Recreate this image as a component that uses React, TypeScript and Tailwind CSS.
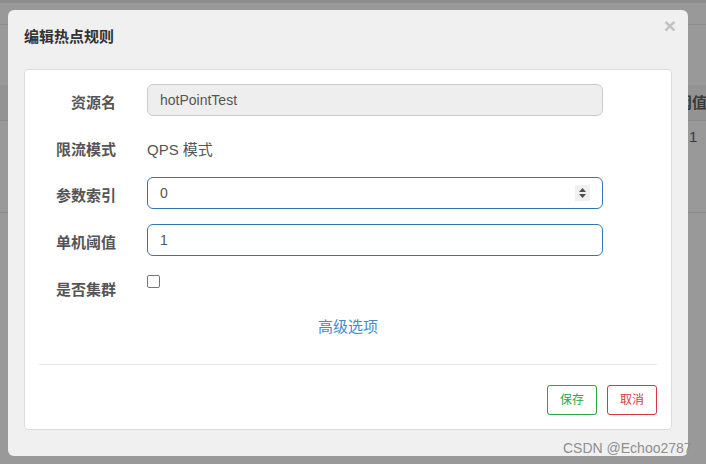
import React from 'react';

const FONT = { fontFamily: '"Liberation Sans", "Noto Sans CJK SC", sans-serif' };

function Spinner() {
  return (
    <span className="flex h-[16px] w-[15px] items-center justify-center bg-[#f0f0f0]">
      <svg width="15" height="16" viewBox="0 0 15 16">
        <polygon points="4,7 11,7 7.5,3" fill="#505050" />
        <polygon points="4,9 11,9 7.5,13" fill="#505050" />
      </svg>
    </span>
  );
}

function Row({ label, children, labelClass = '' }: { label: string; children: React.ReactNode; labelClass?: string }) {
  return (
    <div className="flex items-start">
      <div className={`w-[106px] shrink-0 pr-[15px] pt-[8px] text-right text-[15px] font-bold leading-[21px] text-[#555] ${labelClass}`}>
        {label}
      </div>
      <div className="w-[472px] pl-[16px]">{children}</div>
    </div>
  );
}

export default function App() {
  return (
    <div className="relative h-[464px] w-[706px] overflow-hidden bg-[#999]" style={FONT}>
      {/* page behind the overlay */}
      <div className="h-[25px] border-t-[3px] border-b border-t-[#8d8d8d] border-b-[#8e8e8e]" />
      <div className="h-[60px]" />
      <div className="grid h-[36px] grid-cols-[677px_1fr] items-center border-b border-[#8c8c8c] bg-[#939393]">
        <div />
        <div className="whitespace-nowrap pt-[2px] text-[15px] font-bold text-[#3a3a3a]">阈值</div>
      </div>
      <div className="grid h-[92px] grid-cols-[689px_1fr] border-b border-[#8a8a8a]">
        <div />
        <div className="pt-[6px] text-[15px] leading-[20px] text-[#3a3a3a]">1</div>
      </div>

      {/* modal */}
      <div className="absolute left-[8px] top-[10px] flex h-[446px] w-[680px] flex-col rounded-[6px] bg-[#f0f0f0]">
        <div className="flex h-[59px] shrink-0 items-start justify-between pl-[16px] pr-[12px]">
          <h4 className="pt-[16px] text-[15px] font-bold leading-[22px] text-[#333]">编辑热点规则</h4>
          <span className="mt-[5px] text-[21px] font-bold leading-[21px] text-[#c2c2c2]">×</span>
        </div>

        <div className="mx-[16px] flex h-[361px] flex-col rounded-[4px] border border-[#dcdcdc] bg-white">
          <div className="flex flex-col gap-[15px] pt-[14px]">
            <Row label="资源名">
              <input
                readOnly
                value="hotPointTest"
                className="h-[32px] w-[456px] rounded-[6px] border border-[#ccc] bg-[#eee] px-[12px] text-[14px] text-[#555] outline-none"
                style={FONT}
              />
            </Row>
            <Row label="限流模式">
              <div className="h-[31px] pt-[8px] text-[15px] leading-[21px] text-[#555]">QPS 模式</div>
            </Row>
            <Row label="参数索引">
              <div className="flex h-[32px] w-[456px] items-center rounded-[6px] border border-[#3076b8] pl-[12px] pr-[12px]">
                <input
                  readOnly
                  value="0"
                  className="min-w-0 flex-1 bg-transparent text-[14px] text-[#555] outline-none"
                  style={FONT}
                />
                <Spinner />
              </div>
            </Row>
            <Row label="单机阈值">
              <input
                readOnly
                value="1"
                className="h-[32px] w-[456px] rounded-[6px] border border-[#3076b8] bg-white px-[12px] text-[14px] text-[#555] outline-none"
                style={FONT}
              />
            </Row>
            <Row label="是否集群">
              <div className="h-[32px] pt-[4px]">
                <span className="block h-[13px] w-[13px] rounded-[2px] border border-[#767676] bg-white" />
              </div>
            </Row>
            <div className="text-center text-[15px] leading-[18px] text-[#428bca]">高级选项</div>
          </div>

          <div className="mx-[14px] mt-[28px] flex justify-end gap-[10px] border-t border-[#e5e5e5] pt-[20px]">
            <button className="h-[30px] w-[50px] rounded-[3px] border border-[#28a745] bg-white text-[12px] text-[#28a745]">
              保存
            </button>
            <button className="h-[30px] w-[50px] rounded-[3px] border border-[#dc3545] bg-white text-[12px] text-[#dc3545]">
              取消
            </button>
          </div>
        </div>
      </div>

      {/* watermark */}
      <div className="absolute left-[563px] top-[439px] whitespace-nowrap text-[14px] leading-[18px] text-[#8f8f8f]">
        CSDN @Echoo2787
      </div>
    </div>
  );
}
